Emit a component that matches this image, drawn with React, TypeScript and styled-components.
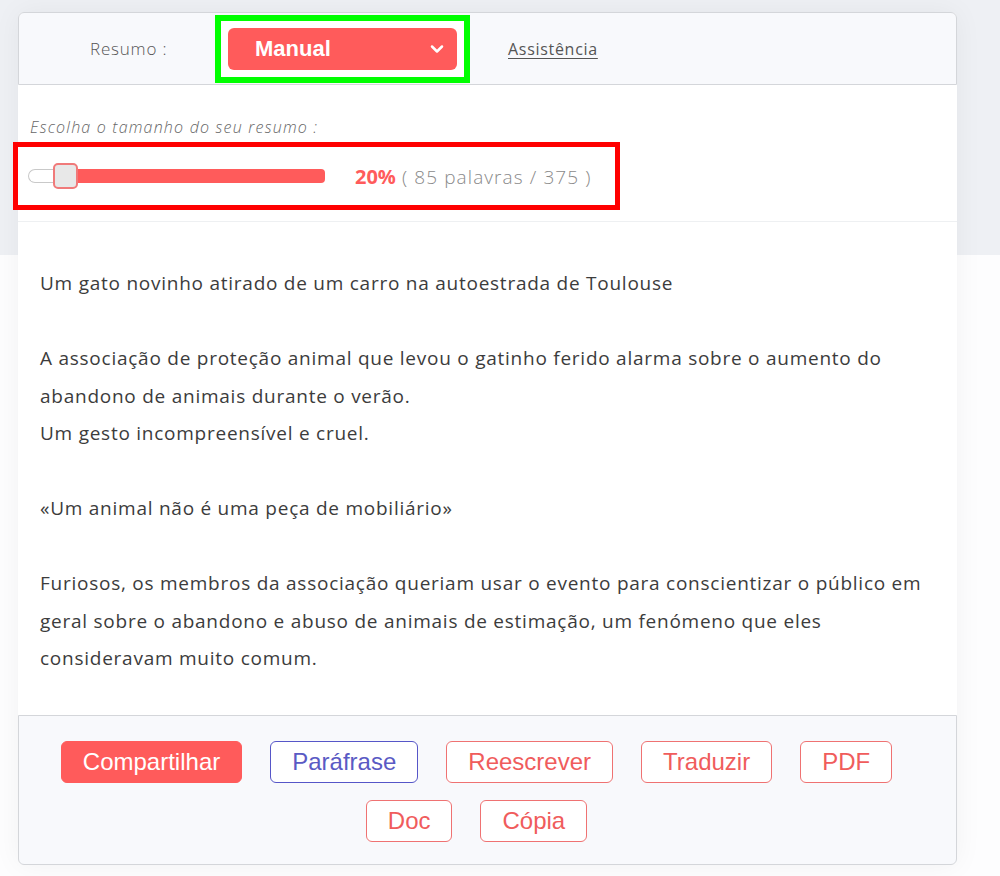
import styled, { createGlobalStyle } from "styled-components";
import { ChevronDown } from "lucide-react";

const Accent = "#ff5b5b";

const GlobalStyle = createGlobalStyle`
  html {
    min-height: 100%;
    background: linear-gradient(to bottom, #eef0f4 0, #eef0f4 255px, #fdfdfe 255px) no-repeat;
    background-color: #fdfdfe;
  }
  body {
    margin: 0;
    font-family: "Open Sans", "Lato", sans-serif;
  }
`;

const actions = [
  { label: "Compartilhar", kind: "filled" },
  { label: "Paráfrase", kind: "blue" },
  { label: "Reescrever", kind: "outline" },
  { label: "Traduzir", kind: "outline" },
  { label: "PDF", kind: "outline" },
  { label: "Doc", kind: "outline" },
  { label: "Cópia", kind: "outline" },
] as const;

type Kind = (typeof actions)[number]["kind"];

function App() {
  return (
    <>
      <GlobalStyle />
      <Page>
        <Card>
          <Header>
            <HeaderLabel>Resumo :</HeaderLabel>
            <GreenFrame>
              <Select>
                <span>Manual</span>
                <ChevronDown size={20} strokeWidth={3} />
              </Select>
            </GreenFrame>
            <HelpLink href="#">Assistência</HelpLink>
          </Header>

          <SizeSection>
            <SizeLabel>Escolha o tamanho do seu resumo :</SizeLabel>
            <RedFrame>
              <Slider>
                <TrackStart />
                <Thumb />
                <TrackFill />
              </Slider>
              <Count>
                <strong>20%</strong> ( 85 palavras / 375 )
              </Count>
            </RedFrame>
          </SizeSection>

          <Summary>
            <p>Um gato novinho atirado de um carro na autoestrada de Toulouse</p>
            <p>
              A associação de proteção animal que levou o gatinho ferido alarma sobre o aumento do
              abandono de animais durante o verão.
              <br />
              Um gesto incompreensível e cruel.
            </p>
            <p>«Um animal não é uma peça de mobiliário»</p>
            <p>
              Furiosos, os membros da associação queriam usar o evento para conscientizar o público em
              geral sobre o abandono e abuso de animais de estimação, um fenómeno que eles
              consideravam muito comum.
            </p>
          </Summary>

          <Footer>
            {actions.map((a) => (
              <ActionButton key={a.label} $kind={a.kind}>
                {a.label}
              </ActionButton>
            ))}
          </Footer>
        </Card>
      </Page>
    </>
  );
}

export default App;

const Page = styled.div`
  padding: 12px 0 11px 18px;
`;

const Card = styled.div`
  width: 939px;
  background: #fff;
  border-radius: 6px;
  box-shadow: 0 0 28px rgba(0, 0, 0, 0.05);
`;

const Header = styled.div`
  display: flex;
  align-items: center;
  height: 73px;
  box-sizing: border-box;
  padding-left: 71px;
  background: #f8f9fc;
  border: 1px solid #d4d6da;
  border-radius: 6px 6px 0 0;
`;

const HeaderLabel = styled.span`
  font-size: 17px;
  font-weight: 300;
  letter-spacing: 0.8px;
  color: #555;
  width: 82px;
  margin-right: 43px;
  white-space: nowrap;
`;

const GreenFrame = styled.div`
  border: 6px solid #00ff00;
  padding: 7px;
  background: #fff;
  margin-top: 1px;
`;

const Select = styled.div`
  display: flex;
  align-items: center;
  justify-content: space-between;
  width: 229px;
  height: 42px;
  box-sizing: border-box;
  padding: 0 10px 0 27px;
  border-radius: 6px;
  background: ${Accent};
  color: #fff;
  font-family: "Liberation Sans", Arial, sans-serif;
  font-weight: 700;
  font-size: 22px;
`;

const HelpLink = styled.a`
  margin-left: 38px;
  font-size: 16px;
  letter-spacing: 0.7px;
  color: #555;
  text-decoration: underline;
  text-underline-offset: 3px;
`;

const SizeSection = styled.div`
  padding-top: 32px;
  border-bottom: 1px solid #eef0f2;
  padding-bottom: 11px;
`;

const SizeLabel = styled.div`
  padding-left: 12px;
  font-size: 16px;
  font-weight: 300;
  letter-spacing: 1.2px;
  line-height: 20px;
  font-style: italic;
  color: #666;
  margin-bottom: 5px;
`;

const RedFrame = styled.div`
  display: flex;
  align-items: center;
  width: 607px;
  height: 68px;
  box-sizing: border-box;
  margin-left: -5px;
  border: 5px solid #ff0000;
  padding-left: 10px;
  background: #fff;
`;

const Slider = styled.div`
  display: flex;
  align-items: center;
  width: 297px;
`;

const TrackStart = styled.div`
  width: 30px;
  height: 14px;
  box-sizing: border-box;
  border: 1px solid #c9c9c9;
  border-right: none;
  border-radius: 7px 0 0 7px;
  background: #fff;
`;

const Thumb = styled.div`
  width: 25px;
  height: 26px;
  box-sizing: border-box;
  margin-left: -5px;
  border: 2px solid #f07a7a;
  border-radius: 5px;
  background: #e8e8e8;
  position: relative;
  z-index: 1;
`;

const TrackFill = styled.div`
  flex: 1;
  height: 14px;
  margin-left: -2px;
  background: ${Accent};
  border-radius: 0 4px 4px 0;
`;

const Count = styled.div`
  margin-left: 30px;
  font-size: 19px;
  font-weight: 300;
  letter-spacing: 1.1px;
  color: #8a8a8a;
  white-space: nowrap;

  & strong {
    color: ${Accent};
    font-size: 20px;
    font-weight: 700;
    letter-spacing: 0;
  }
`;

const Summary = styled.div`
  padding: 43px 27px 37px 22px;
  font-size: 19px;
  letter-spacing: 0.75px;
  line-height: 37.5px;
  color: #3c3c3c;

  & p {
    margin: 0 0 37.5px 0;
  }

  & p:last-child {
    margin-bottom: 0;
  }
`;

const Footer = styled.div`
  display: flex;
  flex-wrap: wrap;
  justify-content: center;
  gap: 17px 28px;
  padding: 25px 50px 22px 28px;
  background: #f8f9fc;
  border: 1px solid #d4d6da;
  border-radius: 0 0 6px 6px;
`;

const ActionButton = styled.button<{ $kind: Kind }>`
  height: 42px;
  padding: 0 21px;
  border-radius: 6px;
  font-family: "Liberation Sans", Arial, sans-serif;
  font-size: 24px;
  cursor: pointer;
  border: 1px solid
    ${({ $kind }) => ($kind === "blue" ? "#5656c8" : $kind === "filled" ? Accent : "#ef7272")};
  background: ${({ $kind }) => ($kind === "filled" ? Accent : "#fff")};
  color: ${({ $kind }) =>
    $kind === "filled" ? "#fff" : $kind === "blue" ? "#5a5ac4" : "#f05c5c"};
`;
